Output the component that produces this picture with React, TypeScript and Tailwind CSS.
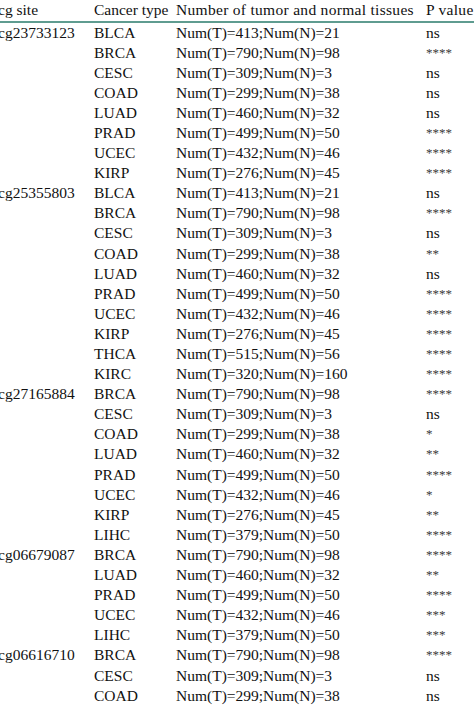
import React from "react";

type Row = [string, string, string];
const groups: { site: string; rows: Row[] }[] = [
  {
    site: "cg23733123",
    rows: [
      ["BLCA", "Num(T)=413;Num(N)=21", "ns"],
      ["BRCA", "Num(T)=790;Num(N)=98", "****"],
      ["CESC", "Num(T)=309;Num(N)=3", "ns"],
      ["COAD", "Num(T)=299;Num(N)=38", "ns"],
      ["LUAD", "Num(T)=460;Num(N)=32", "ns"],
      ["PRAD", "Num(T)=499;Num(N)=50", "****"],
      ["UCEC", "Num(T)=432;Num(N)=46", "****"],
      ["KIRP", "Num(T)=276;Num(N)=45", "****"],
    ],
  },
  {
    site: "cg25355803",
    rows: [
      ["BLCA", "Num(T)=413;Num(N)=21", "ns"],
      ["BRCA", "Num(T)=790;Num(N)=98", "****"],
      ["CESC", "Num(T)=309;Num(N)=3", "ns"],
      ["COAD", "Num(T)=299;Num(N)=38", "**"],
      ["LUAD", "Num(T)=460;Num(N)=32", "ns"],
      ["PRAD", "Num(T)=499;Num(N)=50", "****"],
      ["UCEC", "Num(T)=432;Num(N)=46", "****"],
      ["KIRP", "Num(T)=276;Num(N)=45", "****"],
      ["THCA", "Num(T)=515;Num(N)=56", "****"],
      ["KIRC", "Num(T)=320;Num(N)=160", "****"],
    ],
  },
  {
    site: "cg27165884",
    rows: [
      ["BRCA", "Num(T)=790;Num(N)=98", "****"],
      ["CESC", "Num(T)=309;Num(N)=3", "ns"],
      ["COAD", "Num(T)=299;Num(N)=38", "*"],
      ["LUAD", "Num(T)=460;Num(N)=32", "**"],
      ["PRAD", "Num(T)=499;Num(N)=50", "****"],
      ["UCEC", "Num(T)=432;Num(N)=46", "*"],
      ["KIRP", "Num(T)=276;Num(N)=45", "**"],
      ["LIHC", "Num(T)=379;Num(N)=50", "****"],
    ],
  },
  {
    site: "cg06679087",
    rows: [
      ["BRCA", "Num(T)=790;Num(N)=98", "****"],
      ["LUAD", "Num(T)=460;Num(N)=32", "**"],
      ["PRAD", "Num(T)=499;Num(N)=50", "****"],
      ["UCEC", "Num(T)=432;Num(N)=46", "***"],
      ["LIHC", "Num(T)=379;Num(N)=50", "***"],
    ],
  },
  {
    site: "cg06616710",
    rows: [
      ["BRCA", "Num(T)=790;Num(N)=98", "****"],
      ["CESC", "Num(T)=309;Num(N)=3", "ns"],
      ["COAD", "Num(T)=299;Num(N)=38", "ns"],
    ],
  },
];

const cols = "grid grid-cols-[96px_82px_250px_1fr]";

export default function App() {
  return (
    <div
      className="w-[474px] h-[705px] overflow-hidden bg-white text-[#111] text-[15.5px]"
      style={{ fontFamily: '"Liberation Serif", "Times New Roman", serif' }}
    >
      <div className="ml-[-2px] w-[480px]">
        <div className={`${cols} h-[21px] leading-[20px] whitespace-nowrap`}>
          <div>cg site</div>
          <div>Cancer type</div>
          <div className="tracking-[0.3px]">Number of tumor and normal tissues</div>
          <div className="tracking-[0.3px]">P value</div>
        </div>
        <div className="h-[1.5px] bg-[#5f9c90] ml-[2px]" />
        {groups.map((g) =>
          g.rows.map((r, i) => (
            <div
              key={g.site + r[0]}
              className={`${cols} h-[20.1px] leading-[20.1px] whitespace-nowrap`}
            >
              <div>{i === 0 ? g.site : ""}</div>
              <div>{r[0]}</div>
              <div>{r[1]}</div>
              <div className={r[2] === "ns" ? "" : "text-[#3a3a3a] text-[13px]"}>{r[2]}</div>
            </div>
          ))
        )}
      </div>
    </div>
  );
}
